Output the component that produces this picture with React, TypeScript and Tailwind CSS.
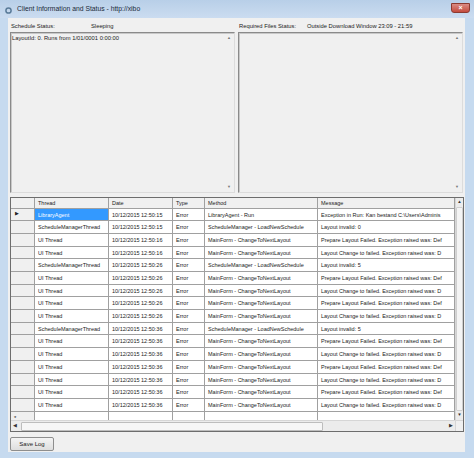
import React from 'react'

type Row = { thread: string; date: string; method: string; message: string }

const SMT = 'ScheduleManagerThread'
const UI = 'UI Thread'
const LOAD = 'ScheduleManager - LoadNewSchedule'
const NEXT = 'MainForm - ChangeToNextLayout'
const PREP = 'Prepare Layout Failed. Exception raised was: Def'
const CHG = 'Layout Change to  failed. Exception raised was: D'

const rows: Row[] = [
  { thread: 'LibraryAgent', date: '10/12/2015 12:50:15', method: 'LibraryAgent - Run', message: 'Exception in Run: Kan bestand C:\\Users\\Adminis' },
  { thread: SMT, date: '10/12/2015 12:50:15', method: LOAD, message: 'Layout invalid: 0' },
  { thread: UI, date: '10/12/2015 12:50:16', method: NEXT, message: PREP },
  { thread: UI, date: '10/12/2015 12:50:16', method: NEXT, message: CHG },
  { thread: SMT, date: '10/12/2015 12:50:26', method: LOAD, message: 'Layout invalid: 5' },
  { thread: UI, date: '10/12/2015 12:50:26', method: NEXT, message: PREP },
  { thread: UI, date: '10/12/2015 12:50:26', method: NEXT, message: CHG },
  { thread: UI, date: '10/12/2015 12:50:26', method: NEXT, message: PREP },
  { thread: UI, date: '10/12/2015 12:50:26', method: NEXT, message: CHG },
  { thread: SMT, date: '10/12/2015 12:50:36', method: LOAD, message: 'Layout invalid: 5' },
  { thread: UI, date: '10/12/2015 12:50:36', method: NEXT, message: PREP },
  { thread: UI, date: '10/12/2015 12:50:36', method: NEXT, message: CHG },
  { thread: UI, date: '10/12/2015 12:50:36', method: NEXT, message: PREP },
  { thread: UI, date: '10/12/2015 12:50:36', method: NEXT, message: CHG },
  { thread: UI, date: '10/12/2015 12:50:36', method: NEXT, message: PREP },
  { thread: UI, date: '10/12/2015 12:50:36', method: NEXT, message: CHG },
]

const cols = 'grid grid-cols-[24px_74px_64px_32px_113px_137px]'
const cell = 'h-[12.7px] border-r border-b border-[#a0a0a0] px-[3px] leading-[12px] whitespace-nowrap overflow-hidden'

function StatusBox({ text }: { text?: string }) {
  return (
    <div className="relative w-full h-[161px] bg-[#f0f0f0] border border-t-[#8a8a8a] border-l-[#8a8a8a] border-r-[#dcdcdc] border-b-[#dcdcdc] shadow-[inset_1px_1px_0_#c8c8c8]">
      <div className="px-[1px] pt-[1px] text-[5.8px] leading-[8px] text-[#222]">{text}</div>
      <span className="absolute right-[3px] top-[2px] text-[4px] text-[#777]">▲</span>
      <span className="absolute right-[3px] bottom-[2px] text-[4px] text-[#777]">▼</span>
    </div>
  )
}

export default function App() {
  return (
    <div className="w-[474px] h-[458px] flex flex-col bg-[#c6daef] text-[#111]" style={{ fontFamily: '"Liberation Sans", Arial, sans-serif' }}>
      {/* title bar */}
      <div className="h-[18px] shrink-0 flex items-center pl-[4px] pr-[4px] bg-gradient-to-b from-[#b8cfe8] to-[#cbdcf0]">
        <svg width="9" height="9" viewBox="0 0 9 9" className="mr-[4px] mt-[2px]">
          <circle cx="4.5" cy="4.5" r="2.6" fill="none" stroke="#5a7b99" strokeWidth="1.5" />
        </svg>
        <span className="text-[6.8px] text-[#1a2a3a] mt-[1px]">Client Information and Status - http://xibo</span>
        <div className="ml-auto mb-[3px] w-[19px] h-[10px] rounded-b-[3px] bg-gradient-to-b from-[#d98b84] to-[#c44a3d] border border-[#8c3a30] flex items-center justify-center">
          <span className="text-white text-[7px] font-bold leading-none">×</span>
        </div>
      </div>

      {/* body */}
      <div className="flex-1 ml-[8px] mr-[9px] bg-[#f0f0f0] flex flex-col px-[1px]">
        <div className="flex gap-[3px] pt-[4px] px-[1px]">
          <div className="flex-1 flex flex-col">
            <div className="h-[10px] text-[5.8px] leading-[8px] flex text-[#222] pl-[1px]">
              <span className="w-[80px]">Schedule Status:</span>
              <span>Sleeping</span>
            </div>
            <StatusBox text="LayoutId: 0. Runs from 1/01/0001 0:00:00" />
          </div>
          <div className="flex-1 flex flex-col">
            <div className="h-[10px] text-[5.8px] leading-[8px] flex text-[#222] pl-[1px]">
              <span className="w-[68px]">Required Files Status:</span>
              <span>Outside Download Window 23:09 - 21:59</span>
            </div>
            <StatusBox />
          </div>
        </div>

        {/* data grid */}
        <div className="mt-[4px] ml-[1px] w-[454px] border border-[#6d6d6d] bg-[#ababab] flex flex-col text-[5.5px] text-[#222]">
          <div className="flex h-[222px]">
            <div className="w-[444px] bg-white overflow-hidden flex flex-col">
              <div className={`${cols} h-[10.6px] shrink-0 bg-[#f0f0f0]`}>
                <div className="border-r border-b border-[#a0a0a0]" />
                {['Thread', 'Date', 'Type', 'Method', 'Message'].map(h => (
                  <div key={h} className="border-r border-b border-[#a0a0a0] px-[3px] leading-[10px] whitespace-nowrap">{h}</div>
                ))}
              </div>
              {rows.map((r, i) => (
                <div key={i} className={`${cols} shrink-0`}>
                  <div className={`${cell} bg-[#f0f0f0] flex items-center`}>
                    {i === 0 && <span className="text-[4.5px] ml-[1px]">▶</span>}
                  </div>
                  <div className={`${cell} ${i === 0 ? 'bg-[#3399ff] text-white' : ''}`}>{r.thread}</div>
                  <div className={cell}>{r.date}</div>
                  <div className={cell}>Error</div>
                  <div className={cell}>{r.method}</div>
                  <div className={cell}>{r.message}</div>
                </div>
              ))}
              <div className={`${cols} shrink-0`}>
                <div className={`${cell} bg-[#f0f0f0] text-[6px] pl-[3px]`}>*</div>
                <div className={cell} />
                <div className={cell} />
                <div className={cell} />
                <div className={cell} />
                <div className={cell} />
              </div>
            </div>
            {/* vertical scrollbar */}
            <div className="flex-1 bg-[#ececec] border-l border-[#d6d6d6] flex flex-col items-center justify-between py-[1px]">
              <span className="text-[4.5px] text-[#333]">▲</span>
              <div className="flex-1 w-[7px] my-[1px] bg-[#f4f4f4] border border-[#cfcfcf] rounded-[1px]" />
              <span className="text-[4.5px] text-[#333]">▼</span>
            </div>
          </div>
          {/* horizontal scrollbar */}
          <div className="flex h-[11px] border-t border-[#d6d6d6]">
            <div className="w-[444px] bg-[#ececec] flex items-center px-[2px]">
              <span className="text-[4.5px] text-[#333]">◀</span>
              <div className="ml-[4px] w-[302px] h-[9px] bg-[#f6f6f6] border border-[#bdbdbd] rounded-[1px]" />
              <span className="ml-auto text-[4.5px] text-[#333]">▶</span>
            </div>
            <div className="flex-1 bg-[#f0f0f0] border-l border-[#d6d6d6]" />
          </div>
        </div>

        <div className="flex mt-[5px] ml-[1px]">
          <button className="w-[44px] h-[14px] text-[6px] leading-[12px] text-[#222] bg-gradient-to-b from-[#f4f4f4] to-[#dedede] border border-[#8e8e8e] rounded-[2px]">
            Save Log
          </button>
        </div>
      </div>
      <div className="h-[6px] shrink-0" />
    </div>
  )
}
